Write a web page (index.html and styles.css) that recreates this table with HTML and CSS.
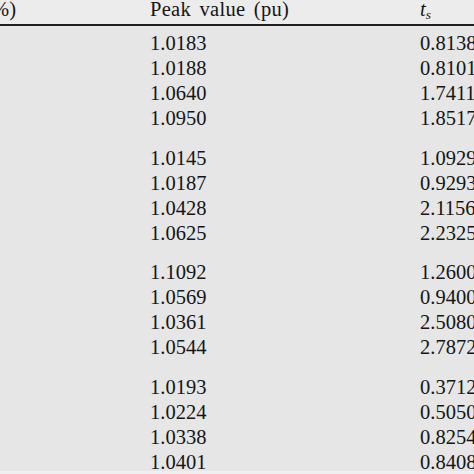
FILE: index.html
```html
<!DOCTYPE html>
<html>
<head>
<meta charset="utf-8">
<link rel="stylesheet" href="styles.css">
</head>
<body>
<div class="sheet">
  <div class="head">
    <div class="c1"><span>Overshoot (%)</span></div>
    <div class="c2 hd">Peak value (pu)</div>
    <div class="c3"><i>t</i><sub>s</sub></div>
  </div>
  <div class="rule"></div>
  <div class="body">
    <div class="group">
      <div class="row"><div class="c1"></div><div class="c2">1.0183</div><div class="c3">0.8138</div></div>
      <div class="row"><div class="c1"></div><div class="c2">1.0188</div><div class="c3">0.8101</div></div>
      <div class="row"><div class="c1"></div><div class="c2">1.0640</div><div class="c3">1.7411</div></div>
      <div class="row"><div class="c1"></div><div class="c2">1.0950</div><div class="c3">1.8517</div></div>
    </div>
    <div class="group">
      <div class="row"><div class="c1"></div><div class="c2">1.0145</div><div class="c3">1.0929</div></div>
      <div class="row"><div class="c1"></div><div class="c2">1.0187</div><div class="c3">0.9293</div></div>
      <div class="row"><div class="c1"></div><div class="c2">1.0428</div><div class="c3">2.1156</div></div>
      <div class="row"><div class="c1"></div><div class="c2">1.0625</div><div class="c3">2.2325</div></div>
    </div>
    <div class="group">
      <div class="row"><div class="c1"></div><div class="c2">1.1092</div><div class="c3">1.2600</div></div>
      <div class="row"><div class="c1"></div><div class="c2">1.0569</div><div class="c3">0.9400</div></div>
      <div class="row"><div class="c1"></div><div class="c2">1.0361</div><div class="c3">2.5080</div></div>
      <div class="row"><div class="c1"></div><div class="c2">1.0544</div><div class="c3">2.7872</div></div>
    </div>
    <div class="group">
      <div class="row"><div class="c1"></div><div class="c2">1.0193</div><div class="c3">0.3712</div></div>
      <div class="row"><div class="c1"></div><div class="c2">1.0224</div><div class="c3">0.5050</div></div>
      <div class="row"><div class="c1"></div><div class="c2">1.0338</div><div class="c3">0.8254</div></div>
      <div class="row"><div class="c1"></div><div class="c2">1.0401</div><div class="c3">0.8408</div></div>
    </div>
  </div>
</div>
</body>
</html>
```
FILE: styles.css
```css
html, body {
  margin: 0;
  padding: 0;
  background: #efefef;
  overflow: hidden;
}
.sheet {
  width: 474px;
  height: 474px;
  font-family: "Liberation Serif", "Times New Roman", serif;
  font-size: 20.5px;
  color: #151515;
  background: #efefef;
  overflow: hidden;
}
.head {
  display: flex;
  align-items: flex-start;
  height: 24px;
  line-height: 19px;
  background: #ececec;
  white-space: nowrap;
}
.head .c1 {
  display: flex;
  justify-content: flex-end;
}
.hd {
  letter-spacing: 0.3px;
  word-spacing: 3px;
}
.c1 { width: 16px; flex: none; }
.c2 { width: 136px; margin-left: 134px; flex: none; white-space: nowrap; }
.c3 { margin-left: 134px; flex: none; white-space: nowrap; }
.c3 sub {
  font-size: 13.5px;
  font-style: italic;
  vertical-align: -3px;
  line-height: 0;
}
.rule {
  height: 2px;
  background: #1e1e1e;
}
.body {
  background: #e6e6e6;
  height: 445px;
  padding-top: 5px;
  box-sizing: border-box;
  display: flex;
  flex-direction: column;
  gap: 14.67px;
}
.row {
  display: flex;
  height: 25px;
  line-height: 25px;
}
```
